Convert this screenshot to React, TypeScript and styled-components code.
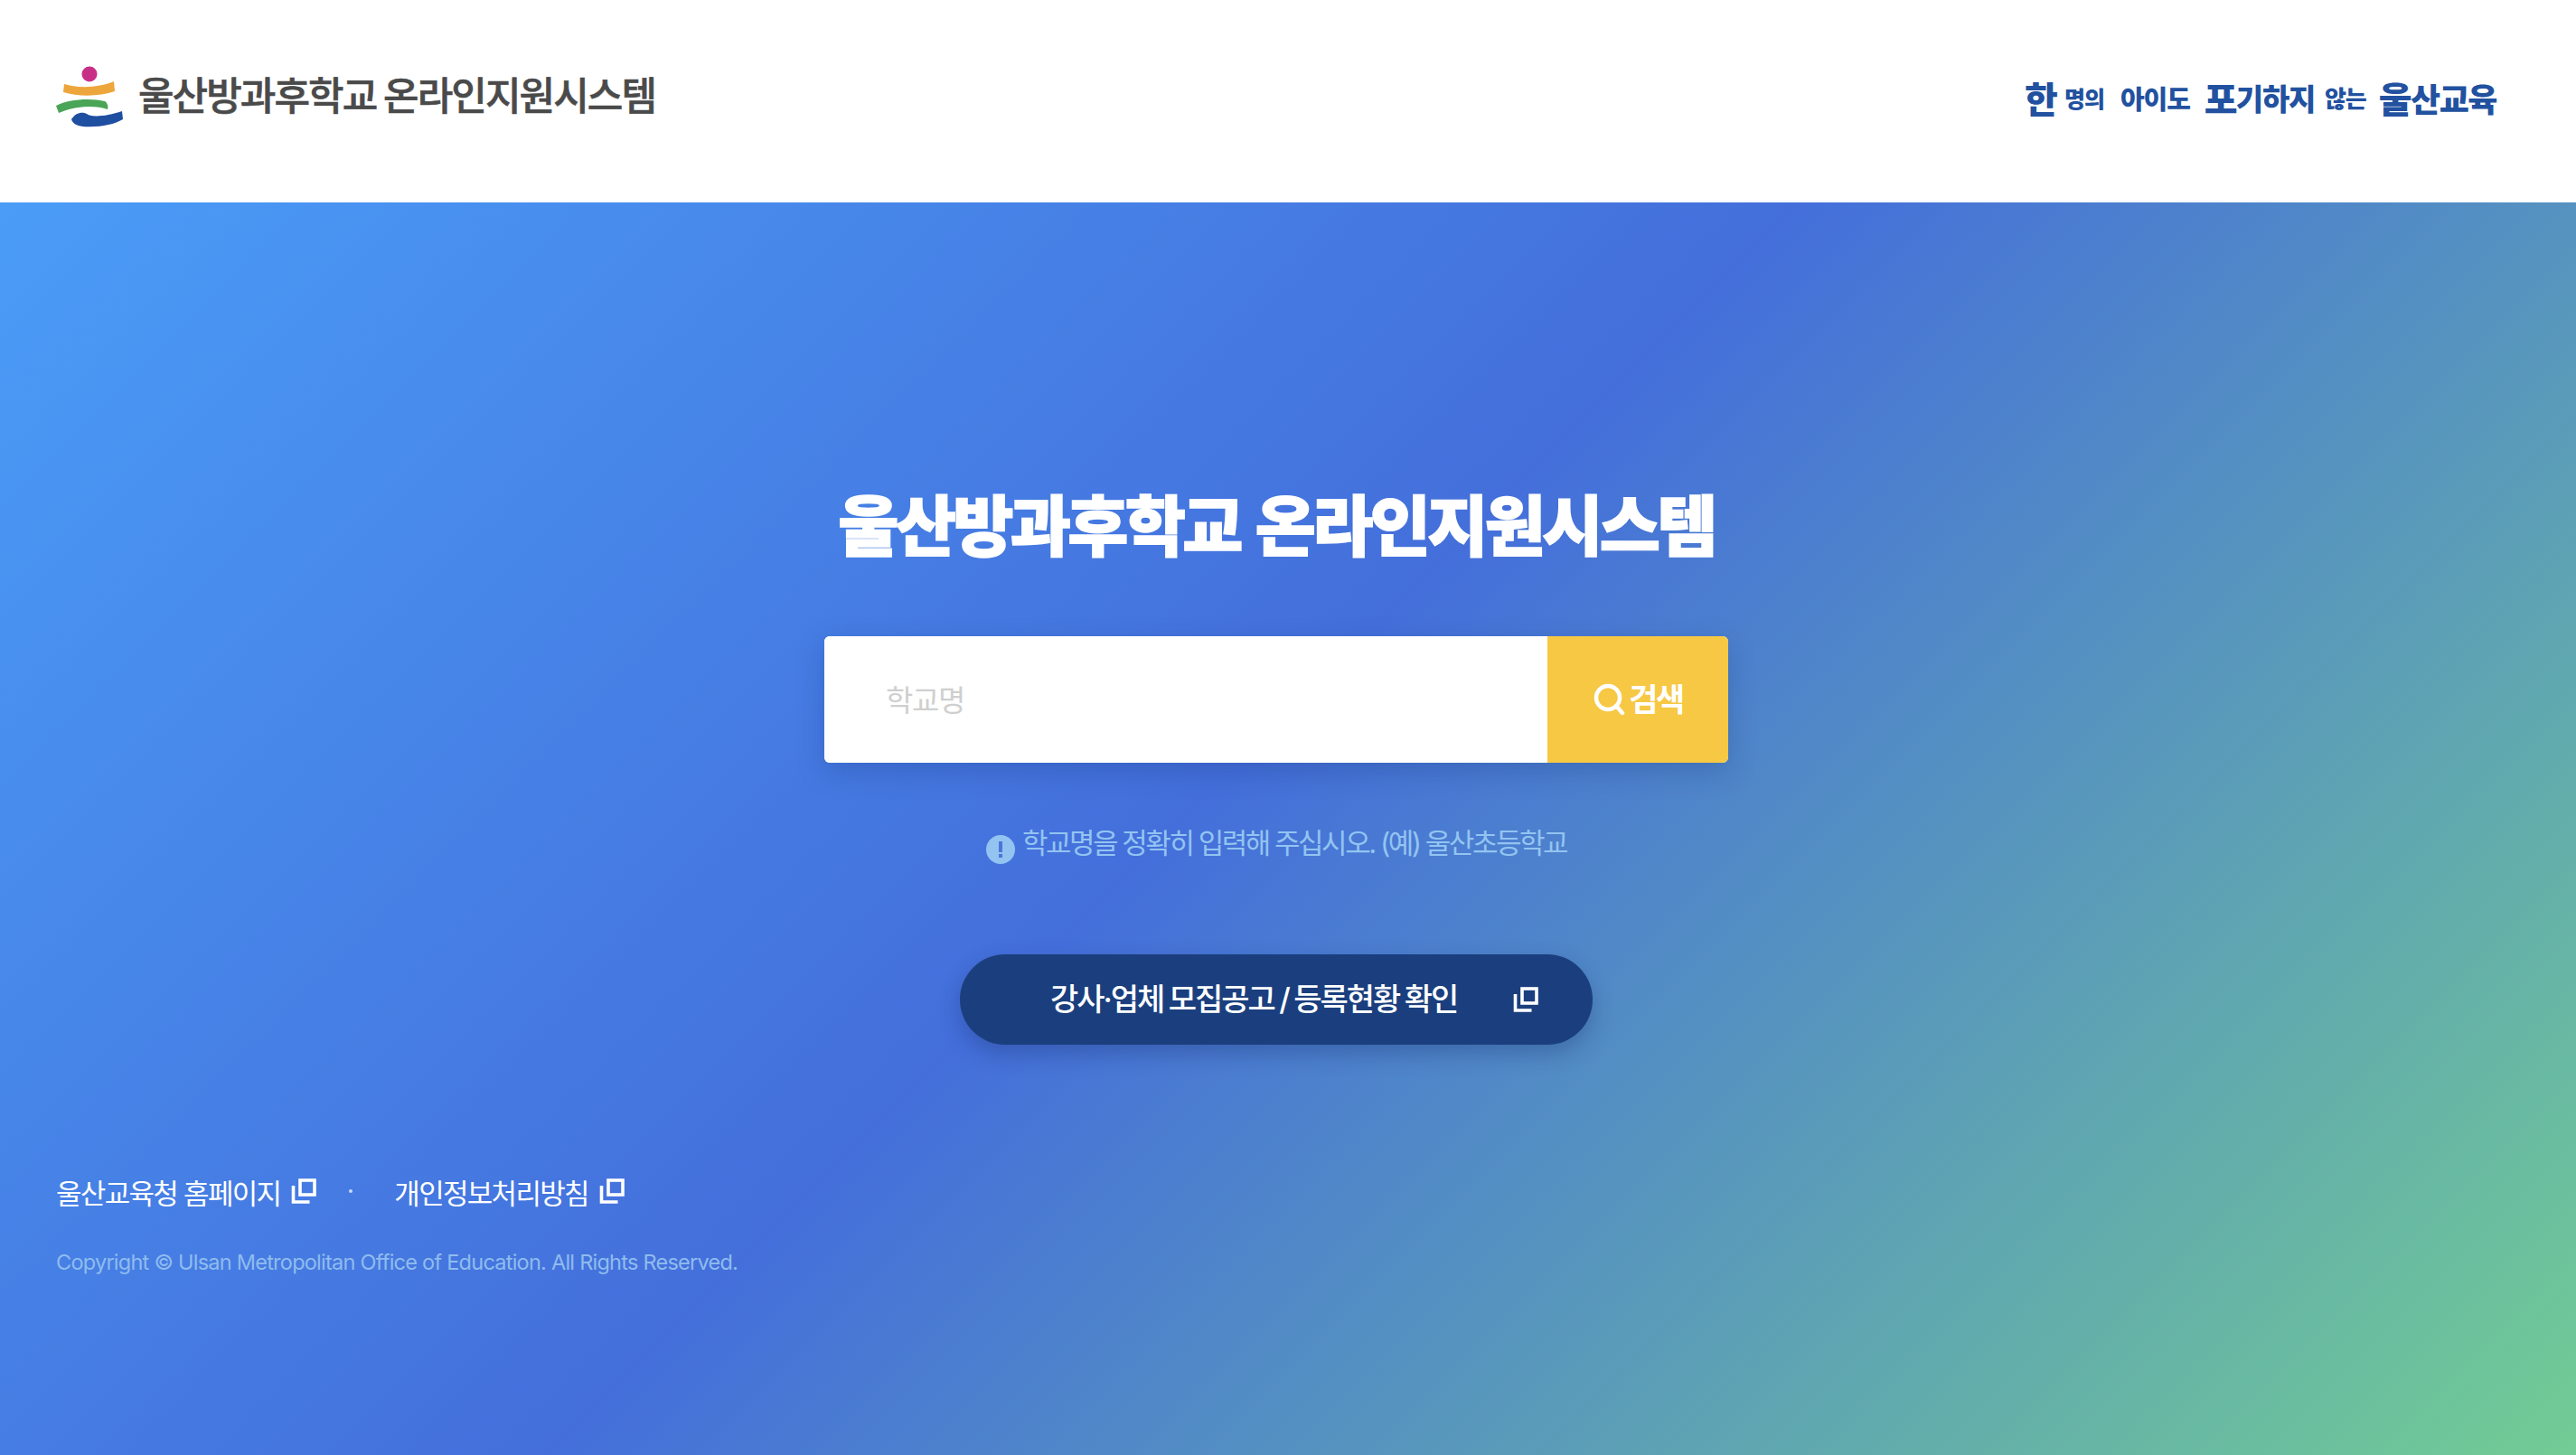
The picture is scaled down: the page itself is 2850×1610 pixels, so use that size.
import styled, { createGlobalStyle } from "styled-components";

const GlobalStyle = createGlobalStyle`
  html, body { margin: 0; padding: 0; }
  body {
    font-family: Inter, "Noto Sans CJK KR", sans-serif;
    background: #fff;
  }
  * { box-sizing: border-box; }
`;

const Page = styled.div`
  width: 2850px;
  height: 1610px;
  display: flex;
  flex-direction: column;
  overflow: hidden;
`;

const Header = styled.header`
  height: 224px;
  flex: none;
  background: #fff;
  display: flex;
  align-items: center;
  justify-content: space-between;
  padding: 0 88px 8px 62px;
`;

const Brand = styled.a`
  display: flex;
  align-items: center;
  gap: 15px;
`;

const BrandName = styled.span`
  font-family: "Noto Sans CJK KR", sans-serif;
  font-size: 43px;
  font-weight: 500;
  line-height: 60px;
  letter-spacing: -0.045em;
  color: #4a4a4a;
  white-space: nowrap;
  margin-bottom: 10px;
  -webkit-text-stroke: 0.6px #4a4a4a;
`;

const Slogan = styled.div`
  display: flex;
  align-items: center;
  font-family: "Noto Sans CJK KR", sans-serif;
  font-weight: 900;
  color: #2251a0;
  white-space: nowrap;
`;

const SloganPart = styled.span<{ $size: number; $gap?: number }>`
  font-size: ${(p) => p.$size}px;
  line-height: 50px;
  margin-left: ${(p) => p.$gap ?? 0}px;
  letter-spacing: -0.04em;
`;

const Main = styled.main`
  flex: 1;
  display: flex;
  flex-direction: column;
  background: linear-gradient(135deg, #4a9cf7 0%, #446fdb 47%, #72cc94 100%);
`;

const Center = styled.section`
  width: 2824px;
  display: flex;
  flex-direction: column;
  align-items: center;
  padding-top: 308px;
`;

const Title = styled.h1`
  margin: 0;
  font-family: "Noto Sans CJK KR", sans-serif;
  font-size: 73px;
  font-weight: 900;
  line-height: 90px;
  letter-spacing: -0.05em;
  word-spacing: 4px;
  color: #fff;
  white-space: nowrap;
  -webkit-text-stroke: 1.5px #fff;
`;

const SearchForm = styled.form`
  width: 1000px;
  height: 140px;
  margin-top: 82px;
  display: flex;
  border-radius: 6px;
  overflow: hidden;
  background: #fff;
  box-shadow: 0 10px 30px rgba(20, 50, 120, 0.25);
`;

const SearchInput = styled.input`
  flex: 1;
  min-width: 0;
  border: 0;
  outline: 0;
  padding: 0 68px 3px;
  font-family: "Noto Sans CJK KR", sans-serif;
  font-size: 33px;
  letter-spacing: -0.04em;
  color: #333;
  &::placeholder { color: #cfcfcf; }
`;

const SearchButton = styled.button`
  width: 200px;
  flex: none;
  border: 0;
  padding: 0 0 3px;
  background: #f7c844;
  color: #fff;
  display: flex;
  align-items: center;
  justify-content: center;
  gap: 4px;
  font-family: "Noto Sans CJK KR", sans-serif;
  font-size: 35px;
  font-weight: 700;
  letter-spacing: -0.07em;
`;

const SearchLabel = styled.span`
  margin-bottom: 3px;
`;

const Hint = styled.p`
  margin: 66px 0 0;
  height: 52px;
  display: flex;
  align-items: flex-start;
  gap: 8px;
  font-size: 31px;
  line-height: 46px;
  letter-spacing: -0.08em;
  color: #93c4f1;
  white-space: nowrap;
`;

const HintIcon = styled.svg`
  width: 32px;
  height: 32px;
  flex: none;
  margin-top: 14px;
`;

const NoticeButton = styled.a`
  width: 700px;
  height: 100px;
  margin-top: 94px;
  border-radius: 50px;
  background: #1b3f7e;
  color: #fff;
  display: flex;
  align-items: center;
  padding: 0 59px 0 100px;
  justify-content: space-between;
  font-size: 34px;
  font-weight: 500;
  letter-spacing: -0.06em;
  word-spacing: -1.5px;
  white-space: nowrap;
  box-shadow: 0 10px 24px rgba(20, 40, 100, 0.3);
`;

const NoticeLabel = styled.span`
  margin-bottom: 6px;
`;

const Footer = styled.footer`
  padding: 137px 0 0 62px;
  display: flex;
  flex-direction: column;
  gap: 38px;
`;

const FooterLinks = styled.nav`
  display: flex;
  align-items: center;
  height: 50px;
`;

const FooterLink = styled.a`
  display: flex;
  align-items: center;
  gap: 11px;
  font-size: 31px;
  letter-spacing: -0.055em;
  color: #fff;
  white-space: nowrap;
`;

const Dot = styled.span`
  width: 4px;
  height: 4px;
  margin: 0 46px 0 35px;
  border-radius: 50%;
  background: rgba(255, 255, 255, 0.7);
`;

const Copyright = styled.p`
  margin: 0;
  font-size: 23.5px;
  line-height: 32px;
  letter-spacing: -0.032em;
  color: #8fbcee;
  white-space: nowrap;
`;

const LinkOut = () => (
  <svg width="30" height="30" viewBox="0 0 30 30" fill="none" stroke="#fff" strokeWidth="3.6">
    <rect x="11" y="3" width="16" height="16" />
    <path d="M3.5 9v18h18" />
  </svg>
);

const Logo = () => (
  <svg width="76" height="72" viewBox="12 12 76 72">
    <circle cx="49" cy="22" r="8.5" fill="#c83088" />
    <path d="M21 33C36 38 60 37 76 30L77 41C60 47 36 47 20 42Z" fill="#eda63c" />
    <path d="M12 57C24 50 50 48 66 52C69 54 70 58 69 61C56 56 32 57 15 65Z" fill="#4aa557" />
    <path d="M29 72C33 65 41 63 46 66C50 70 68 69 85 63L86 72C76 78 60 81 42 80C34 79 30 76 29 72Z" fill="#1f4fa0" />
  </svg>
);

export default function App() {
  return (
    <Page>
      <GlobalStyle />
      <Header>
        <Brand>
          <Logo />
          <BrandName>울산방과후학교 온라인지원시스템</BrandName>
        </Brand>
        <Slogan>
          <SloganPart $size={40}>한</SloganPart>
          <SloganPart $size={25} $gap={9}>명의</SloganPart>
          <SloganPart $size={29} $gap={18}>아이도</SloganPart>
          <SloganPart $size={40} $gap={16}>포</SloganPart>
          <SloganPart $size={33}>기하지</SloganPart>
          <SloganPart $size={26} $gap={11}>않는</SloganPart>
          <SloganPart $size={40} $gap={14}>울</SloganPart>
          <SloganPart $size={36}>산교육</SloganPart>
        </Slogan>
      </Header>
      <Main>
        <Center>
          <Title>울산방과후학교 온라인지원시스템</Title>
          <SearchForm>
            <SearchInput placeholder="학교명" />
            <SearchButton type="button">
              <svg width="36" height="36" viewBox="0 0 36 36" fill="none" stroke="#fff" strokeWidth="4.5" strokeLinecap="round">
                <circle cx="17" cy="17" r="13" />
                <path d="M26 26l7 8" />
              </svg>
              <SearchLabel>검색</SearchLabel>
            </SearchButton>
          </SearchForm>
          <Hint>
            <HintIcon viewBox="0 0 32 32">
              <circle cx="16" cy="16" r="16" fill="#93c4f1" />
              <rect x="14" y="7" width="4" height="12" fill="#4a76d8" />
              <rect x="14" y="21" width="4" height="4" fill="#4a76d8" />
            </HintIcon>
            학교명을 정확히 입력해 주십시오. (예) 울산초등학교
          </Hint>
          <NoticeButton>
            <NoticeLabel>강사·업체 모집공고 / 등록현황 확인</NoticeLabel>
            <LinkOut />
          </NoticeButton>
        </Center>
        <Footer>
          <FooterLinks>
            <FooterLink>
              울산교육청 홈페이지
              <LinkOut />
            </FooterLink>
            <Dot />
            <FooterLink>
              개인정보처리방침
              <LinkOut />
            </FooterLink>
          </FooterLinks>
          <Copyright>Copyright © Ulsan Metropolitan Office of Education. All Rights Reserved.</Copyright>
        </Footer>
      </Main>
    </Page>
  );
}
